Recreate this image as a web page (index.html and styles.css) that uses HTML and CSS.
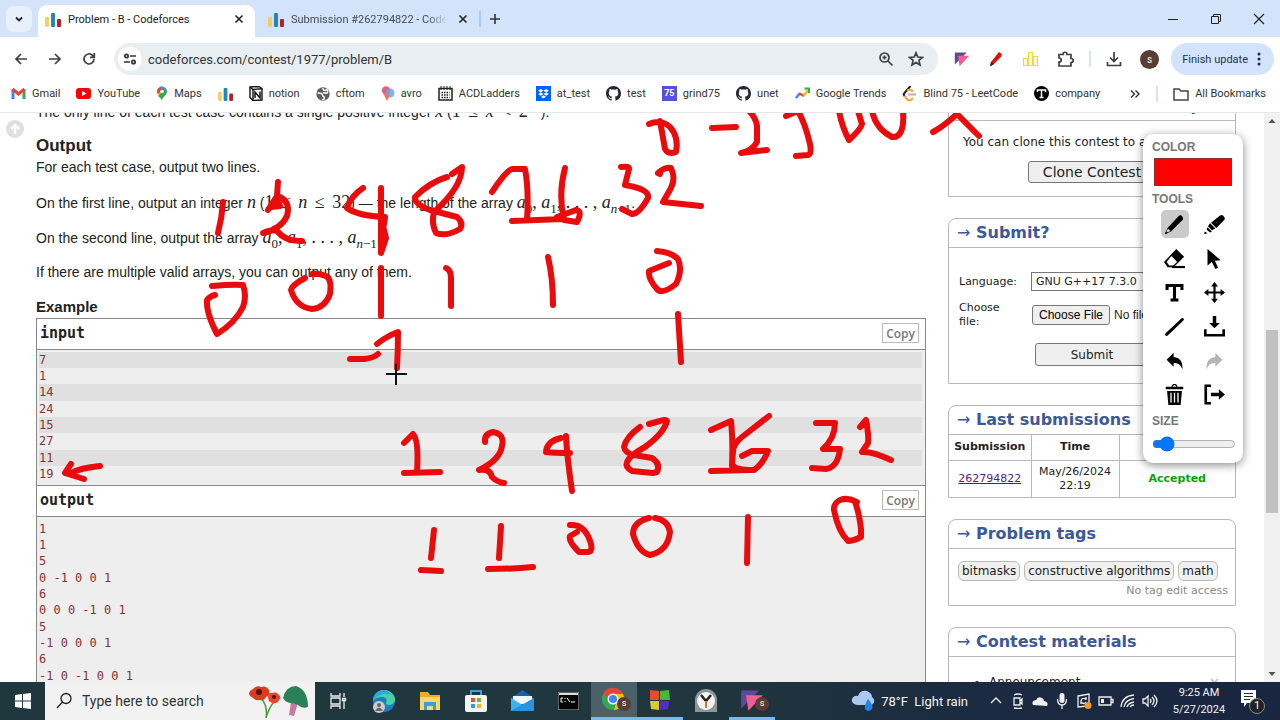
FILE: index.html
```html
<!DOCTYPE html>
<html lang="en">
<head>
<meta charset="utf-8">
<title>Problem - B - Codeforces</title>
<link rel="stylesheet" href="styles.css">
</head>
<body>
<svg class="defs" aria-hidden="true">
  <symbol id="cf" viewBox="0 0 16 16"><rect x="0" y="6" width="4" height="10" rx="1" fill="#f3cf63"/><rect x="6" y="2" width="4" height="14" rx="1" fill="#2387bd"/><rect x="12" y="8" width="4" height="8" rx="1" fill="#b3202c"/></symbol>
  <symbol id="x" viewBox="0 0 16 16"><path d="M4.500 4.500l7 7M11.500 4.500l-7 7" stroke="#222" stroke-width="1.600" fill="none"/></symbol>
  <symbol id="github" viewBox="0 0 16 16"><path fill="#24292f" d="M8 0C3.580 0 0 3.580 0 8c0 3.540 2.290 6.530 5.470 7.590.4.070.55-.17.55-.38v-1.490c-2.010.37-2.530-.49-2.690-.94-.09-.23-.48-.94-.82-1.130-.28-.15-.68-.52-.01-.53.63-.01 1.080.58 1.230.82.72 1.210 1.870.87 2.330.66.07-.52.28-.87.51-1.070-1.780-.2-3.640-.89-3.640-3.950 0-.87.31-1.590.82-2.150-.08-.2-.36-1.020.08-2.120 0 0 .67-.21 2.200.82.64-.18 1.320-.27 2-.27s1.360.09 2 .27c1.530-1.040 2.200-.82 2.200-.82.44 1.100.16 1.920.08 2.120.51.56.82 1.270.82 2.150 0 3.070-1.870 3.750-3.650 3.950.29.25.54.73.54 1.480v2.190c0 .21.15.46.55.38A8 8 0 0 0 16 8c0-4.420-3.580-8-8-8z"/></symbol>
  <symbol id="cast" viewBox="0 0 20 20"><path d="M1 2h15l-15 15z" fill="#5d4a9b"/><path d="M5 6h14L7 19z" fill="#ee5f93"/></symbol>
</svg>

<header class="browser">
  <div class="tabs">
    <button class="tab-search" aria-label="Search tabs"><svg width="12" height="12" viewBox="0 0 12 12"><path d="M3 4.500l3 3 3-3" fill="none" stroke="#222" stroke-width="1.800"/></svg></button>
    <div class="tab active"><svg class="fav" width="16" height="16"><use href="#cf"/></svg><span class="tab-name">Problem - B - Codeforces</span><button aria-label="Close tab"><svg width="16" height="16"><use href="#x"/></svg></button></div>
    <div class="tab"><svg class="fav" width="16" height="16"><use href="#cf"/></svg><span class="tab-name faded">Submission #262794822 - Codeforces</span><button aria-label="Close tab"><svg width="16" height="16"><use href="#x"/></svg></button></div>
    <i class="divider"></i>
    <button class="new-tab" aria-label="New tab"><svg width="14" height="14" viewBox="0 0 14 14"><path d="M7 2v10M2 7h10" stroke="#333" stroke-width="1.600"/></svg></button>
    <div class="window-buttons">
      <button aria-label="Minimize"><svg width="12" height="12" viewBox="0 0 12 12"><path d="M1 6.500h10" stroke="#222"/></svg></button>
      <button aria-label="Restore"><svg width="12" height="12" viewBox="0 0 12 12"><path d="M1.500 3.500h7v7h-7zM3.500 3.500v-2h7v7h-2" fill="none" stroke="#222"/></svg></button>
      <button aria-label="Close"><svg width="12" height="12" viewBox="0 0 12 12"><path d="M1 1l10 10M11 1L1 11" stroke="#222" stroke-width="1.200"/></svg></button>
    </div>
  </div>
  <div class="toolbar">
    <button aria-label="Back"><svg width="16" height="16" viewBox="0 0 16 16"><path d="M14 8H3M8 3L3 8l5 5" class="line"/></svg></button>
    <button aria-label="Forward"><svg width="16" height="16" viewBox="0 0 16 16"><path d="M2 8h11M8 3l5 5-5 5" class="line"/></svg></button>
    <button aria-label="Reload"><svg width="16" height="16" viewBox="0 0 16 16"><path d="M13 8a5 5 0 1 1-1.500-3.600L13 6M13.300 2v4.300H9" class="line"/></svg></button>
    <div class="omnibox">
      <button class="site" aria-label="Site information"><svg width="14" height="14" viewBox="0 0 14 14"><g fill="none" stroke="#333" stroke-width="1.700"><circle cx="3.500" cy="4" r="1.700"/><path d="M7 4h6M1 10h6"/><circle cx="10.500" cy="10" r="1.700"/></g></svg></button>
      <input type="text" aria-label="Address" value="codeforces.com/contest/1977/problem/B">
      <button aria-label="Zoom"><svg width="16" height="16" viewBox="0 0 16 16"><path d="M6.500 2a4.500 4.500 0 1 0 0 9a4.500 4.500 0 1 0 0-9M10 10l4.500 4.500M6.500 4.500v4M4.500 6.500h4" class="line"/></svg></button>
      <button aria-label="Bookmark this tab"><svg width="16" height="16" viewBox="0 0 16 16"><path d="M8 1.800l1.800 4.200 4.600.4-3.500 3 1.100 4.500L8 11.500l-4 2.400 1.100-4.500-3.500-3L6.200 6z" class="line"/></svg></button>
    </div>
    <div class="extensions">
      <button aria-label="Screencastify"><svg width="16" height="16"><use href="#cast"/></svg></button>
      <button aria-label="Paint"><svg width="16" height="16" viewBox="0 0 16 16"><path d="M11 1l3 2-1 3L6 13l-3.500 2L3 11z" fill="#d8140c"/><path d="M3 11l3 2-4 2.500z" fill="#3a1414"/></svg></button>
      <button aria-label="Codeforces extension"><svg width="17" height="16" viewBox="0 0 17 16"><path d="M1.500 14.500v-7h4v7zM6.500 14.500v-13h4v13zM11.500 14.500v-9h4v9z" fill="#fffbe0" stroke="#ecd552" stroke-width="1.200"/></svg></button>
      <button aria-label="Extensions"><svg width="17" height="17" viewBox="0 0 17 17"><path d="M2 3.500h4c0-3 4-3 4 0h4v4c3 0 3 4 0 4v3.500H2v-4c3 0 3-4 0-4z" class="line"/></svg></button>
      <i class="divider"></i>
      <button aria-label="Downloads"><svg width="16" height="16" viewBox="0 0 16 16"><path d="M8 1v9M4 6.500l4 4 4-4M1.500 11v3.500h13V11" class="line"/></svg></button>
      <button class="avatar" aria-label="Profile">s</button>
      <button class="update">Finish update<svg width="4" height="16" viewBox="0 0 4 16"><g fill="#1f2b3d"><circle cx="2" cy="3" r="1.500"/><circle cx="2" cy="8" r="1.500"/><circle cx="2" cy="13" r="1.500"/></g></svg></button>
    </div>
  </div>
  <nav class="bookmarks">
    <a href="#"><svg width="15" height="15" viewBox="0 0 15 15"><path d="M2 13V3.500" stroke="#4285f4" stroke-width="3"/><path d="M13 13V3.500" stroke="#34a853" stroke-width="3"/><path d="M1.500 3l6 5 6-5" fill="none" stroke="#ea4335" stroke-width="3"/></svg>Gmail</a>
    <a href="#"><svg width="15" height="15" viewBox="0 0 15 15"><rect y="2" width="15" height="11" rx="3" fill="#f00"/><path d="M6 5l4.500 2.500L6 10z" fill="#fff"/></svg>YouTube</a>
    <a href="#"><svg width="12" height="15" viewBox="0 0 12 15"><path d="M6 15C6 11 1 9 1 5.500A5 5 0 0 1 2.500 2L6 5z" fill="#fbbc04"/><path d="M6 15c0-4 5-6 5-9.500A5 5 0 0 0 9.500 2L6 6l-4 4c2 2 4 3 4 5z" fill="#34a853"/><path d="M1 5.500A5 5 0 0 1 6 .5L6 5 1.500 8z" fill="#ea4335"/><path d="M4 .9a5 5 0 0 1 6 1.800L6 6z" fill="#4285f4"/><circle cx="6" cy="5.500" r="1.800" fill="#fff"/></svg>Maps</a>
    <a href="#" aria-label="Codeforces"><svg width="15" height="15"><use href="#cf"/></svg></a>
    <a href="#"><svg width="14" height="15" viewBox="0 0 14 15"><path d="M1 1l9-.5 3 2v11.500l-9 .5-3-3z" fill="#fff" stroke="#111" stroke-width="1.400"/><path d="M1 1l3 2.500 9-.8M4 3.500v11" fill="none" stroke="#111" stroke-width="1.400"/><path d="M6 12V6l5 6V5.500" fill="none" stroke="#111" stroke-width="1.500"/></svg>notion</a>
    <a href="#"><svg width="14" height="14" viewBox="0 0 14 14"><circle cx="7" cy="7" r="6.700" fill="#5b6065"/><path d="M1.500 6c3 0 5 0 5 2s2 1 2 3-2 1-2 2M7 1c0 2 1 3 3 2s2 2 1 3-3-1-4 0" fill="none" stroke="#fff" stroke-width="1.500"/></svg>cftom</a>
    <a href="#"><svg width="14" height="15" viewBox="0 0 14 15"><circle cx="5" cy="4.500" r="4.200" fill="#e75f7b"/><circle cx="9" cy="7" r="4.500" fill="#70a5e5" opacity=".85"/><path d="M2 7l7 2-3 6z" fill="#ef765a"/></svg>avro</a>
    <a href="#"><svg width="15" height="15" viewBox="0 0 15 15"><path d="M1 2.500h13V14H1z" fill="#fff" stroke="#222" stroke-width="1.500"/><path d="M3 0v4M6 0v4M9 0v4M12 0v4" stroke="#222"/><path d="M3.500 6.500h8M3.500 9h8M3.500 11.500h8" stroke="#222" stroke-width="1.300" stroke-dasharray="1.500 1"/></svg>ACDLadders</a>
    <a href="#"><svg width="15" height="15" viewBox="0 0 15 15"><path fill="#0061fe" d="M0 0h15v15H0z"/><path fill="#fff" d="M4.800 3L7.500 4.700 4.800 6.400 2.100 4.700zM10.200 3l2.700 1.700-2.700 1.700-2.700-1.700zM4.800 6.400l2.700 1.700-2.700 1.700-2.700-1.700zM10.200 6.400l2.700 1.700-2.700 1.700-2.700-1.700zM7.500 9.300l2.500 1.500-2.500 1.600L5 10.800z"/></svg>at_test</a>
    <a href="#"><svg width="15" height="15"><use href="#github"/></svg>test</a>
    <a href="#"><span class="badge75">75</span>grind75</a>
    <a href="#"><svg width="15" height="15"><use href="#github"/></svg>unet</a>
    <a href="#"><svg width="15" height="15" viewBox="0 0 15 15" fill="none" stroke-width="2.500"><path d="M1 12l4-5" stroke="#4285f4"/><path d="M4.500 7.500L9 10" stroke="#ea4335"/><path d="M8.500 10L13 4" stroke="#fbbc04"/><path d="M9.500 2.500H14V7" stroke="#34a853" stroke-width="2"/></svg>Google Trends</a>
    <a href="#"><svg width="15" height="15" viewBox="0 0 15 15" fill="none"><path d="M8.500 0L2.500 7c-1 1-1 2 0 3" stroke="#222" stroke-width="2"/><path d="M2.500 10l3 3.500c1 1 3 1 4 0l1.500-1.500M5 4.500c2-1 4-1 6 1" stroke="#f5a623" stroke-width="2"/><path d="M6 8.500h8" stroke="#b3b3b3" stroke-width="2"/></svg>Blind 75 - LeetCode</a>
    <a href="#"><svg width="15" height="15" viewBox="0 0 15 15"><circle cx="7.500" cy="7.500" r="7.500" fill="#000"/><path d="M3.500 6V4h8v2M7.500 4v8M5.500 11.500h4" fill="none" stroke="#fff" stroke-width="1.500"/></svg>company</a>
    <span class="book-end"><button class="more" aria-label="More bookmarks"><svg width="12" height="12" viewBox="0 0 12 12"><path d="M2 2.500L5.500 6 2 9.500M6.500 2.500L10 6 6.500 9.500" fill="none" stroke="#333" stroke-width="1.400"/></svg></button><i class="divider"></i><a href="#"><svg width="16" height="14" viewBox="0 0 16 14"><path d="M1 2h5l2 2h7v9H1z" fill="none" stroke="#444" stroke-width="1.500"/></svg>All Bookmarks</a></span>
  </nav>
</header>

<main class="page">
  <div class="content">
    <svg class="to-top" width="18" height="18" viewBox="0 0 18 18"><circle cx="9" cy="9" r="9" fill="#d9e1e3"/><path d="M9 14V5M5 9l4-4 4 4" fill="none" stroke="#fff" stroke-width="2.500"/></svg>
    <article class="statement">
      <p class="cut">The only line of each test case contains a single positive integer <span class="m"><i>x</i></span> (<span class="m">1 <b>≤</b> <i>x</i> <b>&lt;</b> 2<sup>30</sup></span>).</p>
      <h2>Output</h2>
      <p>For each test case, output two lines.</p>
      <p>On the first line, output an integer <span class="m"><i>n</i></span> (<span class="m">1 <b>≤</b> <i>n</i> <b>≤</b> 32</span>) — the length of the array <span class="m"><i>a</i><sub>0</sub>, <i>a</i><sub>1</sub>, . . . , <i>a</i><sub><i>n</i>−1</sub></span>.</p>
      <p>On the second line, output the array <span class="m"><i>a</i><sub>0</sub>, <i>a</i><sub>1</sub>, . . . , <i>a</i><sub><i>n</i>−1</sub></span>.</p>
      <p>If there are multiple valid arrays, you can output any of them.</p>
      <h3>Example</h3>
      <section class="sample">
        <div class="sample-head">input<button>Copy</button></div>
        <div class="lines striped"><div>7</div><div>1</div><div>14</div><div>24</div><div>15</div><div>27</div><div>11</div><div>19</div></div>
        <div class="sample-head">output<button>Copy</button></div>
        <div class="lines out"><div>1</div><div>1</div><div>5</div><div>0 -1 0 0 1</div><div>6</div><div>0 0 0 -1 0 1</div><div>5</div><div>-1 0 0 0 1</div><div>6</div><div>-1 0 -1 0 0 1</div><div>5</div></div>
      </section>
    </article>
    <aside class="side">
      <section class="box clone">
        <h2>→ Clone Contest to Mashup</h2>
        <p>You can clone this contest to a mashup.</p>
        <button>Clone Contest</button>
      </section>
      <section class="box submit">
        <h2><span class="arrow">→</span> Submit?</h2>
        <form>
          <label for="lang">Language:</label><select id="lang"><option>GNU G++17 7.3.0</option></select>
          <label for="file">Choose file:</label><input id="file" type="file">
          <button type="button">Submit</button>
        </form>
      </section>
      <section class="box last">
        <h2><span class="arrow">→</span> Last submissions</h2>
        <table>
          <tr><th>Submission</th><th>Time</th><th>Verdict</th></tr>
          <tr><td><a href="#">262794822</a></td><td>May/26/2024 22:19</td><td class="ok">Accepted</td></tr>
        </table>
      </section>
      <section class="box tags">
        <h2><span class="arrow">→</span> Problem tags</h2>
        <div class="tag-list"><span>bitmasks</span><span>constructive algorithms</span><span>math</span></div>
        <p>No tag edit access</p>
      </section>
      <section class="box materials">
        <h2><span class="arrow">→</span> Contest materials</h2>
        <ul><li>Announcement<svg width="9" height="9" viewBox="0 0 9 9"><path d="M1 1l7 7M8 1L1 8" stroke="#ccc" stroke-width="2"/></svg></li></ul>
      </section>
    </aside>
  </div>
  <div class="scrollbar"><svg width="16" height="16" viewBox="0 0 16 16"><path d="M4.500 10h7L8 6z" fill="#505050"/></svg><i></i><svg width="16" height="16" viewBox="0 0 16 16"><path d="M4.500 6h7L8 10z" fill="#505050"/></svg></div>

  <svg class="ink" width="1280" height="570" viewBox="0 113 1280 570" aria-hidden="true">
    <g>
      <path d="M649 124Q661 119 670 127Q679 137 676 152Q668 155 665 149L660 121"/>
      <path d="M712 128L736 127M749 111Q756 118 757 126V142Q752 151 741 153L767 150"/>
      <path d="M786 116L798 111Q805 123 810 144Q812 154 808 155L796 156"/>
      <path d="M839 111Q842 127 849 140Q861 129 862 124L858 111M872 111Q876 129 892 137Q905 138 903 111"/>
      <path d="M933 132Q944 126 957 114L979 136"/>
      <path d="M223 202Q222 218 218 233"/>
      <path d="M278 182L277 196L268 210M273 205L278 196Q291 201 287 216Q281 229 263 233Q273 229 277 231Q286 242 302 241"/>
      <path d="M271 207L277 198L280 206Z"/>
      <path d="M363 188Q351 196 347 208Q358 216 385 217M381 188V253M381 218L386 238L381 253M382 235L385 218"/>
      <path d="M447 177Q430 182 415 197Q414 204 430 210L457 217Q464 223 460 229Q446 237 436 233Q431 223 434 212Q462 187 462 167L452 174"/>
      <path d="M492 192Q506 171 512 169H525Q529 190 527 220M512 221L562 219M565 168Q558 194 564 220L577 222Q583 211 576 210L557 217"/>
      <path d="M621 167Q630 166 629 169L625 185Q650 189 648 198Q639 214 632 214L622 209"/>
      <path d="M660 174L658 173Q665 167 671 168Q676 178 671 188L663 202L701 206"/>
      <path d="M212 286Q234 284 243 285Q247 296 243 307Q235 323 217 334Q206 313 207 300Q210 296 215 295"/>
      <path d="M305 278Q292 285 291 290Q296 307 312 309Q325 308 330 294Q332 279 326 276Q318 273 312 274"/>
      <path d="M381 268V316M446 268Q451 270 451 278V306M548 257Q553 278 553 305M678 314L681 362"/>
      <path d="M657 251Q671 252 678 259Q683 270 676 284Q662 295 657 289Q648 279 649 271L669 263"/>
      <path d="M350 359H364Q374 358 378 354M377 344Q387 336 398 332Q398 351 397 368"/>
      <path d="M404 443L413 434Q419 440 417 472M404 473L440 472"/>
      <path d="M485 442Q484 434 493 432Q505 434 502 446Q500 460 479 470Q490 468 492 477Q497 482 504 483"/>
      <path d="M561 438Q547 441 546 452Q554 453 570 453M566 436Q567 457 572 491"/>
      <path d="M640 427Q626 437 624 447Q625 453 634 455L652 458Q661 464 657 472L653 473L632 471Q625 467 627 462Q630 455 645 447Q664 433 667 421Q666 419 660 421L649 424"/>
      <path d="M711 430L731 421Q733 440 732 466M711 471L750 470M769 416L742 437Q733 444 733 452L732 464Q735 470 754 470Q763 464 768 451H752L742 456"/>
      <path d="M816 423H835Q835 438 823 449H840Q838 467 826 469L812 468"/>
      <path d="M860 427L866 420Q869 436 868 443L862 452Q872 451 891 460M861 426L867 424"/>
      <path d="M434 530L431 558M421 570L441 571M501 526L499 558M488 569Q512 569 533 567M748 517L747 563"/>
      <path d="M570 525Q582 524 588 536Q595 551 588 552H579Q568 541 570 536L577 532"/>
      <path d="M649 518Q633 522 633 534Q638 552 650 555Q668 551 670 532Q668 520 655 518"/>
      <path d="M857 502Q848 497 840 500Q833 504 834 510Q838 531 848 541Q853 541 861 537V529Q859 512 855 502"/>
      <path d="M100 466Q80 468 71 473L65 473L84 479M65 473L71 464"/>
    </g>
    <path class="cross" d="M386 374h21M396 364v21"/>
  </svg>

  <section class="paint" aria-label="Drawing tools">
    <h4>COLOR</h4>
    <button class="swatch" aria-label="Color"></button>
    <h4>TOOLS</h4>
    <div class="tools">
      <button class="on" aria-label="Pencil"><svg viewBox="0 0 24 24"><path d="M16 3q3-3 5 0t-1 5L8 20l-7 3 3-7z"/><path d="M2.500 21.500l2-5 3 3z" fill="#ddd"/><path d="M1 23l1-3 2 2z"/></svg></button>
      <button aria-label="Highlighter"><svg viewBox="0 0 24 24"><path d="M18 2q3-2 5 1t-1 5l-8 8-6-6z"/><path d="M7 10.500l6 6-4 2-4.500-4.500zM4 15l5 5-2 1-4-3zM1 20l3 2-4 1z"/></svg></button>
      <button aria-label="Eraser"><svg viewBox="0 0 24 24"><path d="M14 1l9 9-12 12H4l-4-6z"/><path d="M8.500 9l6.500 7-4.500 4H6l-3-4z" fill="#fff"/><path d="M9 20.500h15V23H9z"/></svg></button>
      <button aria-label="Select"><svg viewBox="0 0 24 24"><path d="M4 1v19l5-4 4 8 3-1.500-3.500-8L19 14z"/></svg></button>
      <button aria-label="Text"><svg viewBox="0 0 24 24"><path d="M3.500 9V4h17v5M12 4v16M7.500 20.500h9" class="thick"/></svg></button>
      <button aria-label="Move"><svg viewBox="0 0 24 24"><path d="M12 2v20M2 12h20" stroke="#000" stroke-width="2.500"/><path d="M12 0l4 5H8zM12 24l4-5H8zM0 12l5-4v8zM24 12l-5-4v8z"/></svg></button>
      <button aria-label="Line"><svg viewBox="0 0 24 24"><path d="M3 21L21 4" class="thick" stroke-linecap="round"/></svg></button>
      <button aria-label="Download"><svg viewBox="0 0 24 24"><path d="M1.500 15v7h21v-7" fill="none" stroke="#000" stroke-width="3"/><path d="M10 0h4v8h4l-6 6-6-6h4z"/></svg></button>
      <button aria-label="Undo"><svg viewBox="0 0 24 24"><path d="M3 11l8-8v5q11 1 10 14-3-8-10-7v4z"/></svg></button>
      <button aria-label="Redo" disabled><svg viewBox="0 0 24 24"><path d="M21 11l-8-8v5Q2 9 3 22q3-8 10-7v4z" fill="#b5b5b5"/></svg></button>
      <button aria-label="Clear"><svg viewBox="0 0 24 24"><path d="M9 3q3-5 6 0" fill="none" stroke="#000" stroke-width="1.500"/><path d="M2 3h20v3H2zM3.500 8h17L19 24H5z"/><path d="M8 10v11M12 10v11M16 10v11" stroke="#fff" stroke-width="1.500"/></svg></button>
      <button aria-label="Exit"><svg viewBox="0 0 24 24"><path d="M8 2H2v20h6" fill="none" stroke="#000" stroke-width="3"/><path d="M8 10h9V6l7 6-7 6v-4H8z"/></svg></button>
    </div>
    <h4><label for="size">SIZE</label></h4>
    <input id="size" type="range" min="0" max="100" value="10">
  </section>
</main>

<footer class="taskbar">
  <button class="start" aria-label="Start"><svg width="16" height="16" viewBox="0 0 16 16"><path fill="#fff" d="M0 2l7-1v6.500H0zM8 1l8-1v7.500H8zM0 8.500h7V15l-7-1zM8 8.500h8V16l-8-1z"/></svg></button>
  <label class="search"><svg width="18" height="18" viewBox="0 0 18 18"><circle cx="11" cy="6.500" r="5" fill="none" stroke="#222" stroke-width="1.300"/><path d="M7.500 10L2 16" stroke="#222" stroke-width="1.300"/></svg><input type="text" placeholder="Type here to search" aria-label="Search"><svg width="62" height="34" viewBox="0 0 62 34"><path d="M13 14q7 8 5 20M27 17q-6 6-9 17" fill="none" stroke="#4c9a3d" stroke-width="1.500"/><path d="M1 9q1-3 4-4 4-4 8-2 5-2 8 3 2 5-3 7-2 4-6 3-5 1-8-3-3-1-3-4z" fill="#dd3b20"/><path d="M20 12q1-4 5-3 3-2 6 2 3 3 0 5-2 4-6 3-5 0-5-7z" fill="#e8452b"/><circle cx="11" cy="8" r="3" fill="#4b1714"/><circle cx="26" cy="13" r="2" fill="#4b1714"/><path d="M43 18l7 1-4 13-5-1z" fill="#c77ba0"/><path d="M35 14Q38 2 48 2q12 4 12 21-6 2-10-2-4-2-8-2-5-1-7-5z" fill="#2a8059"/></svg></label>
  <div class="apps">
    <button aria-label="Task view"><svg width="18" height="18" viewBox="0 0 18 18" fill="none" stroke="#eee" stroke-width="1.300"><path d="M2 1v3h9V1M2 17v-3h9v3M2 6h9v6H2zM15 1v4M15 9v8"/><path d="M13.500 6.500h3v2h-3z"/></svg></button>
    <button aria-label="Edge"><svg width="24" height="24" viewBox="0 0 24 24"><circle cx="12" cy="12" r="11" fill="#1780c4"/><path d="M1 10C3 3 8 1 12 1c7 0 12 6 11 11-2 5-9 5-9 2 2-4-1-6-4-6-4 0-7 1-9 4z" fill="#4bd0a6"/><path d="M1 10C3 3 8 1 12 1c3 0 6 2 7 5-6-3-13-1-18 6z" fill="#29a9d8"/><circle cx="7" cy="18" r="6" fill="#ccc"/><circle cx="7" cy="16" r="2" fill="#666"/><path d="M3 22q4-7 8 0z" fill="#666"/></svg></button>
    <button aria-label="File Explorer"><svg width="22" height="20" viewBox="0 0 22 20"><path d="M1 1h8l2 3h10v15H1z" fill="#e9ac2b"/><path d="M1 6h20v13H1z" fill="#ffd766"/><path d="M5 11h12v8h-3v-4H8v4H5z" fill="#3b9bdc"/></svg></button>
    <button aria-label="Store"><svg width="22" height="24" viewBox="0 0 22 24"><path d="M6 7V2h10v5" fill="none" stroke="#35a3dc" stroke-width="2"/><rect y="6" width="22" height="17" rx="2" fill="#f4f4f4"/><path d="M6 9h4v4H6z" fill="#e9512b"/><path d="M12 9h4v4h-4z" fill="#7bb62c"/><path d="M6 15h4v4H6z" fill="#22a2df"/><path d="M12 15h4v4h-4z" fill="#f6b51b"/></svg></button>
    <button aria-label="Mail"><svg width="23" height="22" viewBox="0 0 23 22"><path d="M0 8l11.500-8L23 8v13H0z" fill="#1263ae"/><path d="M2 6h19v8H2z" fill="#f2f8fc"/><path d="M0 8l11.500 7L0 21z" fill="#35b5f1"/><path d="M23 8v13H0z" fill="#2694e1"/></svg></button>
    <button aria-label="Command Prompt"><svg width="21" height="18" viewBox="0 0 21 18"><path d="M0 0h21v18H0z" fill="#050505" stroke="#bbb"/><path d="M1 1h19v2H1z" fill="#ddd"/><path d="M5 6H3v4h2M7 6v1M7 9v1M9 6l3 4M13 10h4" fill="none" stroke="#fff"/></svg></button>
    <button class="current" aria-label="Chrome"><svg width="26" height="26" viewBox="0 0 26 26"><circle cx="12" cy="12" r="11" fill="#33a852"/><path d="M2.500 6.500A11 11 0 0 1 22 7l-9 2-4 5z" fill="#ea4335"/><path d="M22 7a11 11 0 0 1-9 16l3-10-3-6z" fill="#fbbc05"/><circle cx="12" cy="12" r="5.500" fill="#fff"/><circle cx="12" cy="12" r="4" fill="#4285f4"/></svg><small class="dot">s</small></button>
    <button class="open" aria-label="Blocks"><svg width="22" height="22" viewBox="0 0 22 22"><path d="M1 1l9 1v9H1z" fill="#e94932"/><path d="M11 2l9-1 1 10H11z" fill="#46b83a"/><path d="M1 12h9v9l-8-1z" fill="#dfca2d"/><path d="M11 12h9l-1 8-8 1z" fill="#5130c9"/></svg></button>
    <button aria-label="Clock"><svg width="24" height="24" viewBox="0 0 24 24"><path d="M1 23V11a11 11 0 0 1 22 0v12z" fill="#8c979c"/><circle cx="12" cy="12" r="9" fill="#f5f5f3"/><path d="M7 6l5 6 5-6" fill="none" stroke="#222" stroke-width="2.500"/><path d="M12 12v7" stroke="#e66a31" stroke-width="2"/></svg></button>
    <button class="open" aria-label="Screencastify"><svg width="24" height="24"><use href="#cast"/></svg><small class="dot">s</small></button>
  </div>
  <button class="weather"><svg width="24" height="22" viewBox="0 0 24 22"><path d="M6 15Q0 14 1 9 3 5 7 6q2-6 9-5 5 2 5 6 4 3 1 7-2 2-6 1z" fill="#a9c8f2"/><path d="M17 9q6 7 4 10-4 4-7 0-1-4 3-10z" fill="#2383e8"/></svg>78°F&nbsp; Light rain</button>
  <div class="tray">
    <svg viewBox="0 0 16 16"><path d="M3 10l5-5 5 5" class="w"/></svg>
    <svg viewBox="0 0 16 16"><path d="M4 5h6v7H4zM10 8l2-2v5l-2-2M4 2q4-2 8 0M4 15q4 1 8 0" class="w"/></svg>
    <svg viewBox="0 0 16 16"><path d="M1 12q-2-4 3-5 2-4 6-2 2 1 2 3 5 1 3 5z" fill="#eee"/></svg>
    <svg viewBox="0 0 16 16"><rect x="5.500" y="0" width="5" height="10" rx="2.500" fill="#eee"/><path d="M3.500 6q0 6 4.500 6t4.500-6M8 12v4" class="w"/></svg>
    <svg viewBox="0 0 16 16"><path d="M2 3l11-2v12l-11 1zM5 8q1-4 5-2M10 4v3M10 9q-2 3-5 0v2" class="w"/><circle cx="12" cy="12.500" r="3.500" fill="#f39a24"/></svg>
    <svg viewBox="0 0 16 16"><path d="M1 4h12v8H1zM13 6.500h2v3h-2" class="w"/><path d="M3 6h3v4H3z" fill="#eee"/></svg>
    <svg viewBox="0 0 16 16"><path d="M1 14Q2 3 14 2M4 14Q5 7 14 5.500M7 14q1-4 7-5M10 14q1-2 4-2" class="w"/></svg>
    <svg viewBox="0 0 16 16"><path d="M1 6h2l3-3v10l-3-3H1zM8 6q2 2 0 4M10 4q4 4 0 8M12 2q6 6 0 12" class="w"/></svg>
  </div>
  <time>9:25 AM<br>5/27/2024</time>
  <button class="notify" aria-label="Notifications"><svg width="22" height="24" viewBox="0 0 22 24"><path d="M0 1h15v13H6l-3 4v-4H0z" fill="#fff"/><path d="M3 4.500h9M3 7.500h9M3 10.500h6" stroke="#1c2b40"/></svg><small>1</small></button>
</footer>
</body>
</html>
```
FILE: styles.css
```css
* { box-sizing: border-box; }
body {
  margin: 0;
  height: 100vh;
  display: flex;
  flex-direction: column;
  overflow: hidden;
  background: #fff;
  color: #222;
  font: 11px Roboto, sans-serif;
}
button, input, select { font: inherit; color: inherit; }
button { border: 0; padding: 0; background: none; display: flex; align-items: center; justify-content: center; }
h2, h3, h4, p, ul { margin: 0; padding: 0; }
svg { flex: none; display: block; }
.defs { display: none; }
.line { fill: none; stroke: #3c4043; stroke-width: 1.7; }
.divider { width: 2px; height: 16px; background: #d3e3fd; }

/* Browser frame */
.browser { flex: none; border-bottom: 1px solid #e4e7ea; }
.tabs { display: flex; align-items: center; height: 37px; padding: 0 8px 0 6px; background: #d3e3f9; }
.tab-search { width: 26px; height: 26px; border-radius: 8px; background: #e8f0fc; }
.tab { display: flex; align-items: center; width: 224px; height: 32px; padding: 0 8px 4px 13px; margin-top: 5px; color: #444b53; }
.tab.active { width: 217px; margin-left: 6px; padding-left: 7px; background: #fff; border-radius: 9px 9px 0 0; color: #222; }
.tab .fav { margin-right: 7px; }
.tab-name { flex: 1; min-width: 0; overflow: hidden; white-space: nowrap; }
.faded { mask-image: linear-gradient(90deg, #000 88%, transparent); margin-right: 8px; }
.tabs .divider { background: #a8c7fa; }
.new-tab { width: 28px; height: 28px; }
.window-buttons { display: flex; gap: 31px; margin-left: auto; padding-right: 7px; }
.toolbar { display: flex; align-items: center; gap: 18px; height: 44px; padding: 0 6px 0 13px; }
.omnibox { flex: 1; display: flex; align-items: center; gap: 14px; height: 32px; margin-left: -1px; padding: 0 14px 0 4px; border-radius: 16px; background: #e9eef3; }
.omnibox input { flex: 1; min-width: 0; border: 0; padding: 0; margin-left: -8px; background: none; font-size: 13px; color: #333; }
.site { width: 24px; height: 24px; border-radius: 12px; background: #fff; }
.extensions { display: flex; align-items: center; gap: 18px; margin-left: -2px; }
.extensions .divider { margin: 0 -3px; }
.avatar { width: 19px; height: 19px; border-radius: 10px; background: #593c34; color: #fff; font-size: 10px; }
.update { gap: 9px; height: 32px; margin-left: -6px; padding: 0 13px 0 11px; border-radius: 16px; background: #d3e3fd; color: #24364f; font-size: 11px; }
.bookmarks { display: flex; align-items: center; gap: 16px; height: 31px; padding: 0 14px 6px 11px; white-space: nowrap; }
.bookmarks a { display: flex; align-items: center; gap: 6px; color: #333; text-decoration: none; }
.badge75 { width: 15px; height: 15px; background: #5551d8; color: #fff; font: bold 9px/15px Roboto, sans-serif; text-align: center; }
.book-end { display: flex; align-items: center; gap: 15px; margin-left: auto; }

/* Page */
.page { position: relative; flex: 1; min-height: 0; display: flex; overflow: hidden; background: #fff; }
.content { flex: 1; min-width: 0; display: flex; align-items: flex-start; padding: 0 28px 0 6px; }
.to-top { margin: 7px 12px 0 0; }
.statement { flex: 1; min-width: 0; margin-top: -12px; font: 14px/20px "Liberation Sans", sans-serif; }
.statement p { height: 20px; margin-bottom: 15px; white-space: nowrap; }
.statement .cut { margin-bottom: 14px; }
.statement h2 { font-size: 17px; line-height: 22px; }
.statement h3 { font-size: 15px; line-height: 20px; margin-bottom: 1px; }
.m { font: 18px/20px "Liberation Serif", serif; }
.m b { font-weight: normal; margin: 0 3px; }
.m sub, .m sup { font-size: 13px; line-height: 0; }
.sample { border: 1px solid #888; font-family: "DejaVu Sans Mono", monospace; }
.sample-head { display: flex; justify-content: space-between; align-items: center; height: 30px; padding: 0 6px 2px 3px; background: #fff; font: bold 15px "DejaVu Sans Mono", monospace; }
.sample-head button { height: 20px; padding: 0 3px; border: 1px solid #bbb; color: #777; font: 600 12px "Open Sans", sans-serif; }
.lines { padding: 2px 3px 3px 2px; border-top: 1px solid #888; background: #eee; color: #883333; font: 12px "DejaVu Sans Mono", monospace; }
.lines div { height: 16px; line-height: 16px; }
.lines div:nth-child(3n) { height: 17px; }
.striped { border-bottom: 1px solid #888; }
.striped div:nth-child(odd) { background: #e0e0e0; }
.out { padding-top: 4px; }

/* Sidebar */
.side { width: 288px; flex: none; margin: -22px 0 0 22px; font: 12px/14px "DejaVu Sans", sans-serif; }
.box { border: 1px solid #b9b9b9; border-radius: 8px 8px 0 0; margin-bottom: 21px; }
.box h2 { height: 29px; padding-left: 8px; border-bottom: 1px solid #b9b9b9; color: #3b5998; font-size: 16px; line-height: 28px; white-space: nowrap; }
.arrow { font-weight: normal; }
.clone { height: 106px; }
.clone p { padding: 14px 0 0 14px; white-space: nowrap; }
.box button { border: 1px solid #767676; border-radius: 3px; background: #efefef; }
.clone button { width: 128px; height: 22px; margin: 12px auto 0; font-size: 14px; }
.submit { height: 166px; }
.submit form { display: grid; grid-template-columns: 60px 1fr; align-items: center; gap: 10px 15px; padding: 24px 10px 0; font-size: 11px; }
.submit select { width: 190px; height: 19px; margin-left: -3px; border: 1px solid #767676; border-radius: 0; background: #fff; }
.submit input { width: 190px; font: 12px "Liberation Sans", sans-serif; margin-left: -2px; }
.submit input::file-selector-button { height: 20px; padding: 0 6px; border: 1px solid #767676; border-radius: 3px; background: #efefef; font: 12px "Liberation Sans", sans-serif; }
.submit form button { grid-column: 2; width: 114px; height: 23px; margin-left: 1px; margin-top: 4px; font-size: 12px; }
table { width: 100%; border-collapse: collapse; table-layout: fixed; text-align: center; }
th, td { border-right: 1px solid #b9b9b9; padding: 0 4px; }
th:last-child, td:last-child { border-right: 0; }
th { height: 25px; border-bottom: 1px solid #b9b9b9; padding: 0; font-size: 11px; }
th:first-child { width: 82px; }
th:nth-child(2) { width: 88px; }
td { height: 37px; font-size: 11px; }
td a { color: #551a8b; font-size: 11px; }
.ok { color: #00a900; font-weight: bold; }
.tags { height: 87px; }
.tag-list { display: flex; gap: 4px; padding: 12px 9px 0; }
.tag-list span { height: 20px; padding: 0 3px; border: 1px solid #b9b9b9; border-radius: 6px; background: #f0f0f0; line-height: 18px; white-space: nowrap; }
.tags p { margin: 3px 7px 0; text-align: right; color: #888; font-size: 11px; }
.materials ul { padding: 18px 16px 0 40px; }
.materials li svg { float: right; margin-top: 3px; }

.scrollbar { width: 16px; flex: none; display: flex; flex-direction: column; justify-content: space-between; background: #f1f1f1; }
.scrollbar i { flex: none; width: 12px; height: 183px; margin: 201px 2px auto; background: #c1c1c1; }

/* Drawing layer */
.ink { position: absolute; left: 0; top: 0; }
.ink g { fill: none; stroke: #ea0c0c; stroke-width: 6; stroke-linecap: round; stroke-linejoin: round; }
.cross { stroke: #111; stroke-width: 2; }
.paint { position: absolute; right: 37px; top: 21px; width: 100px; height: 329px; padding: 6px 8px; border-radius: 10px; background: #fff; box-shadow: 0 2px 10px #0007; }
.paint h4 { padding-left: 1px; color: #777; font: 900 12px/14px "Liberation Sans", sans-serif; }
.swatch { width: 78px; height: 28px; margin: 4px 3px 6px; background: #f00; border: 1px solid #94302c; }
.tools { display: grid; grid-template-columns: 28px 28px; gap: 6px 12px; justify-content: center; padding: 4px 0 6px 3px; }
.tools button { width: 28px; height: 28px; border-radius: 5px; }
.tools .on { background: #cacaca; }
.tools svg { width: 21px; height: 21px; }
.thick { fill: none; stroke: #000; stroke-width: 3.5; }
.paint input { width: 84px; height: 16px; margin: 8px 0 0 1px; accent-color: #0075ff; }

/* Taskbar */
.taskbar { flex: none; display: flex; align-items: center; height: 38px; background: linear-gradient(90deg, #1f383e, #20363e 55%, #1b2b40 75%, #1a2540); color: #f3f3f3; }
.start { width: 45px; height: 100%; }
.search { display: flex; align-items: center; width: 270px; height: 100%; padding: 0 5px 0 10px; background: #f2f2f2; color: #333; }
.search input { flex: 1; min-width: 0; border: 0; padding: 0; margin-left: 9px; background: none; font-size: 14px; }
.search input::placeholder { color: #333; }
.apps { display: flex; height: 100%; }
.apps button { position: relative; width: 46px; height: 100%; }
.apps .current { background: #4b6168; }
.apps .current, .apps .open { border-bottom: 3px solid #76b9ed; }
.apps small { position: absolute; left: 26px; top: 15px; width: 14px; height: 14px; border-radius: 7px; color: #fff; font-size: 9px; line-height: 13px; }
.apps .dot { background: #593c34; }
.weather { gap: 6px; margin-left: auto; font-size: 13px; white-space: nowrap; }
.tray { display: flex; gap: 6px; margin: 0 10px 0 20px; }
.tray svg { width: 16px; height: 16px; }
.w { fill: none; stroke: #eee; stroke-width: 1.3; }
time { width: 62px; text-align: center; font-size: 11px; line-height: 17px; }
.notify { position: relative; margin: 0 17px 0 11px; }
.notify small { position: absolute; left: 8px; top: 9px; width: 16px; height: 16px; border: 1px solid #888; border-radius: 8px; background: #222; font-size: 11px; line-height: 14px; }
```
